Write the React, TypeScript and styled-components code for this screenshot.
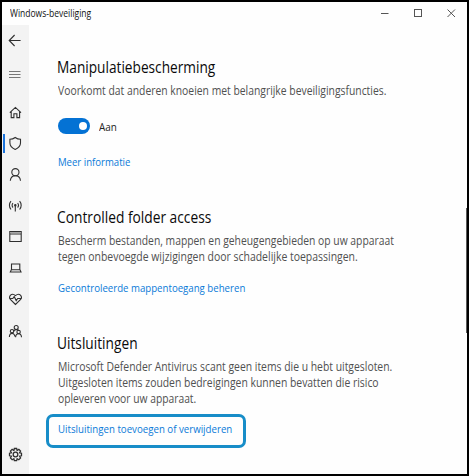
import React from 'react';
import styled, { createGlobalStyle } from 'styled-components';

const GlobalStyle = createGlobalStyle`
  * { box-sizing: border-box; }
  body {
    margin: 0;
    background: #000;
    font-family: "Open Sans", "Noto Sans", sans-serif;
  }
`;

const Window = styled.div`
  width: 469px;
  height: 476px;
  border: 2px solid #000;
  background: #fefefe;
  display: flex;
  flex-direction: column;
  overflow: hidden;
`;

const TitleBar = styled.header`
  height: 23px;
  flex: none;
  display: flex;
  justify-content: space-between;
  padding: 3px 8px 0 8px;
`;

const Condensed = styled.span<{ $scale: number }>`
  display: block;
  width: max-content;
  white-space: nowrap;
  transform: scaleX(${(p) => p.$scale});
  transform-origin: 0 0;
`;

const Title = styled.div`
  width: 120px;
  font-size: 10px;
  line-height: 16px;
  color: #111;
`;

const Controls = styled.div`
  display: flex;
  gap: 18px;
  padding-top: 1px;
`;

const ControlIcon = styled.svg`
  width: 15px;
  height: 15px;
  fill: none;
  stroke: #555;
  stroke-width: 1;
`;

const Body = styled.div`
  flex: 1;
  display: flex;
  min-height: 0;
`;

const Nav = styled.nav`
  width: 27px;
  flex: none;
  display: flex;
  flex-direction: column;
  background: #f3f3f3;
`;

const NavItem = styled.div<{ $before?: string; $after?: string }>`
  position: relative;
  height: 31px;
  flex: none;
  display: flex;
  align-items: center;
  padding-left: 6px;
  margin-top: ${(p) => p.$before ?? '0'};
  margin-bottom: ${(p) => p.$after ?? '0'};
`;

const ActiveMark = styled.span`
  position: absolute;
  left: 1px;
  top: 6px;
  width: 1.5px;
  height: 19px;
  background: #1a73dc;
`;

const Icon = styled.svg<{ $color?: string }>`
  width: 15px;
  height: 15px;
  fill: none;
  stroke: ${(p) => p.$color ?? '#2f2f2f'};
  stroke-width: 1.1;
`;

const Content = styled.main`
  flex: 1;
  min-width: 0;
  padding: 32px 0 0 29px;
`;

const Section = styled.section<{ $height: number }>`
  height: ${(p) => p.$height}px;
`;

const Heading = styled.h2`
  margin: 0 0 0 -1px;
  font-size: 15.5px;
  line-height: 20px;
  font-weight: 400;
  color: #0a0a0a;
`;

const Description = styled.div`
  margin-top: 6px;
  font-size: 12px;
  line-height: 15.8px;
  color: #505050;
`;

const ToggleRow = styled.div`
  display: flex;
  gap: 9px;
  margin-top: 19.2px;
  height: 16px;
`;

const Switch = styled.span`
  width: 32px;
  height: 16px;
  border-radius: 8px;
  background: #0472d4;
  display: flex;
  align-items: center;
  justify-content: flex-end;
  padding-right: 3px;
`;

const Thumb = styled.span`
  width: 8px;
  height: 8px;
  border-radius: 50%;
  background: #fff;
`;

const ToggleLabel = styled.span`
  font-size: 11.5px;
  line-height: 17px;
  color: #222;
`;

const Link = styled.a<{ $gap: number }>`
  display: block;
  margin-top: ${(p) => p.$gap}px;
  font-size: 11.5px;
  line-height: 16px;
  color: #0a7ad8;
`;

const Highlight = styled.div`
  width: 200px;
  height: 34px;
  margin: 7.6px 0 0 -12px;
  padding-left: 9px;
  border: 3px solid #178dc8;
  border-radius: 7px;
`;

const ScrollThumb = styled.div`
  width: 1px;
  height: 125px;
  margin-top: 183px;
  background: #5a5a5a;
`;

export default function App() {
  return (
    <Window>
      <GlobalStyle />
      <TitleBar>
        <Title><Condensed $scale={0.853}>Windows-beveiliging</Condensed></Title>
        <Controls>
          <ControlIcon viewBox="0 0 15 15"><path d="M3 7.500h7.500" /></ControlIcon>
          <ControlIcon viewBox="0 0 15 15"><rect x="3.500" y="3.500" width="7" height="7" /></ControlIcon>
          <ControlIcon viewBox="0 0 15 15"><path d="m3.500 3.500 7.500 7.500m0-7.500-7.500 7.500" /></ControlIcon>
        </Controls>
      </TitleBar>
      <Body>
        <Nav>
          <NavItem>
            <Icon viewBox="0 0 15 15"><path d="M12.600 7.500H1.400M6.600 2 1.200 7.500 6.600 13" /></Icon>
          </NavItem>
          <NavItem $before="3px">
            <Icon viewBox="0 0 15 15" $color="#777"><path d="M1 4.500h11.500M1 7.500h11.500M1 10.500h11.500" /></Icon>
          </NavItem>
          <NavItem $before="7px">
            <Icon viewBox="0 0 15 15"><path d="M1.800 7.700 7.400 2.400 13 7.700M3.200 6.700v5.900h2.700V8.700h3v3.900h2.700V6.700" /></Icon>
          </NavItem>
          <NavItem>
            <ActiveMark />
            <Icon viewBox="0 0 15 15"><path d="M7.200 1.500c1.700 1.300 3.400 1.800 5.300 1.800v3.500c0 3.200-2.200 5.300-5.300 6.600C4.100 12.100 1.900 10 1.900 6.800V3.300C3.800 3.300 5.500 2.800 7.200 1.500Z" /></Icon>
          </NavItem>
          <NavItem>
            <Icon viewBox="0 0 15 15"><circle cx="7.400" cy="5.200" r="3.600" /><path d="M2.300 13.800c.3-3 2.400-5 5.100-5s4.800 2 5.100 5" /></Icon>
          </NavItem>
          <NavItem>
            <Icon viewBox="0 0 15 15">
              <path d="M7.300 7.300v6.200M5 9.500c-1.200-1.200-1.200-3.200 0-4.400M9.600 9.500c1.200-1.200 1.200-3.200 0-4.400M3 11.500C.9 9.200.9 5.400 3 3.100M11.600 11.500c2.100-2.300 2.100-6.100 0-8.400" />
              <circle cx="7.300" cy="7.200" r=".7" />
            </Icon>
          </NavItem>
          <NavItem>
            <Icon viewBox="0 0 15 15"><path d="M1.800 2.500h11.400v10H1.800zM1.800 5h11.400" /><path d="M2.300 3.700h10.400" stroke="#999" /></Icon>
          </NavItem>
          <NavItem>
            <Icon viewBox="0 0 15 15"><path d="M3.500 9.700V4h8.300v5.700M3.300 9.800h8.700l1 2.200H2.300z" /></Icon>
          </NavItem>
          <NavItem>
            <Icon viewBox="0 0 15 15">
              <path d="M7.500 13.500 2.600 8.700C-.1 5.700 3.600 1.100 7.500 4.600c3.900-3.500 7.600 1.100 4.900 4.100z" />
              <path d="M1.800 7.500h3l1.400-1.900 2 4 1.500-2.100h3.500" />
            </Icon>
          </NavItem>
          <NavItem $before="2px">
            <Icon viewBox="0 0 15 15">
              <circle cx="8.200" cy="3.500" r="2" />
              <circle cx="4" cy="7.200" r="1.700" />
              <circle cx="10.600" cy="8" r="1.700" />
              <path d="M1.400 13c0-4.700 5.200-4.700 5.400-.6M7.600 13.200c.2-4.600 5.700-4.600 5.900 0M5.800 7.200c.6-1.700 4.600-1.900 5.200-.5" />
            </Icon>
          </NavItem>
          <NavItem $before="auto" $after="4px">
            <Icon viewBox="1 .5 13 13">
              <path d="M6.500 1.800h2l.4 1.700 1.500-.9 1.500 1.500-.9 1.400 1.700.4v2.200l-1.700.4.9 1.500-1.500 1.500-1.500-.9-.4 1.700h-2l-.4-1.700-1.500.9L3.100 10 4 8.500l-1.700-.4V5.900L4 5.500l-.9-1.400 1.500-1.500 1.500.9z" />
              <circle cx="7.500" cy="7" r="2" />
            </Icon>
          </NavItem>
        </Nav>
        <Content>
          <Section $height={150}>
            <Heading><Condensed $scale={0.882}>Manipulatiebescherming</Condensed></Heading>
            <Description>
              <Condensed $scale={0.863}>Voorkomt dat anderen knoeien met belangrijke beveiligingsfuncties.</Condensed>
            </Description>
            <ToggleRow>
              <Switch><Thumb /></Switch>
              <ToggleLabel><Condensed $scale={0.86}>Aan</Condensed></ToggleLabel>
            </ToggleRow>
            <Link $gap={20}><Condensed $scale={0.833}>Meer informatie</Condensed></Link>
          </Section>
          <Section $height={126}>
            <Heading><Condensed $scale={0.888}>Controlled folder access</Condensed></Heading>
            <Description>
              <Condensed $scale={0.861}>Bescherm bestanden, mappen en geheugengebieden op uw apparaat</Condensed>
              <Condensed $scale={0.871}>tegen onbevoegde wijzigingen door schadelijke toepassingen.</Condensed>
            </Description>
            <Link $gap={15.4}><Condensed $scale={0.839}>Gecontroleerde mappentoegang beheren</Condensed></Link>
          </Section>
          <Section $height={130}>
            <Heading><Condensed $scale={0.885}>Uitsluitingen</Condensed></Heading>
            <Description>
              <Condensed $scale={0.865}>Microsoft Defender Antivirus scant geen items die u hebt uitgesloten.</Condensed>
              <Condensed $scale={0.866}>Uitgesloten items zouden bedreigingen kunnen bevatten die risico</Condensed>
              <Condensed $scale={0.858}>opleveren voor uw apparaat.</Condensed>
            </Description>
            <Highlight>
              <Link $gap={4}><Condensed $scale={0.842}>Uitsluitingen toevoegen of verwijderen</Condensed></Link>
            </Highlight>
          </Section>
        </Content>
        <ScrollThumb />
      </Body>
    </Window>
  );
}
